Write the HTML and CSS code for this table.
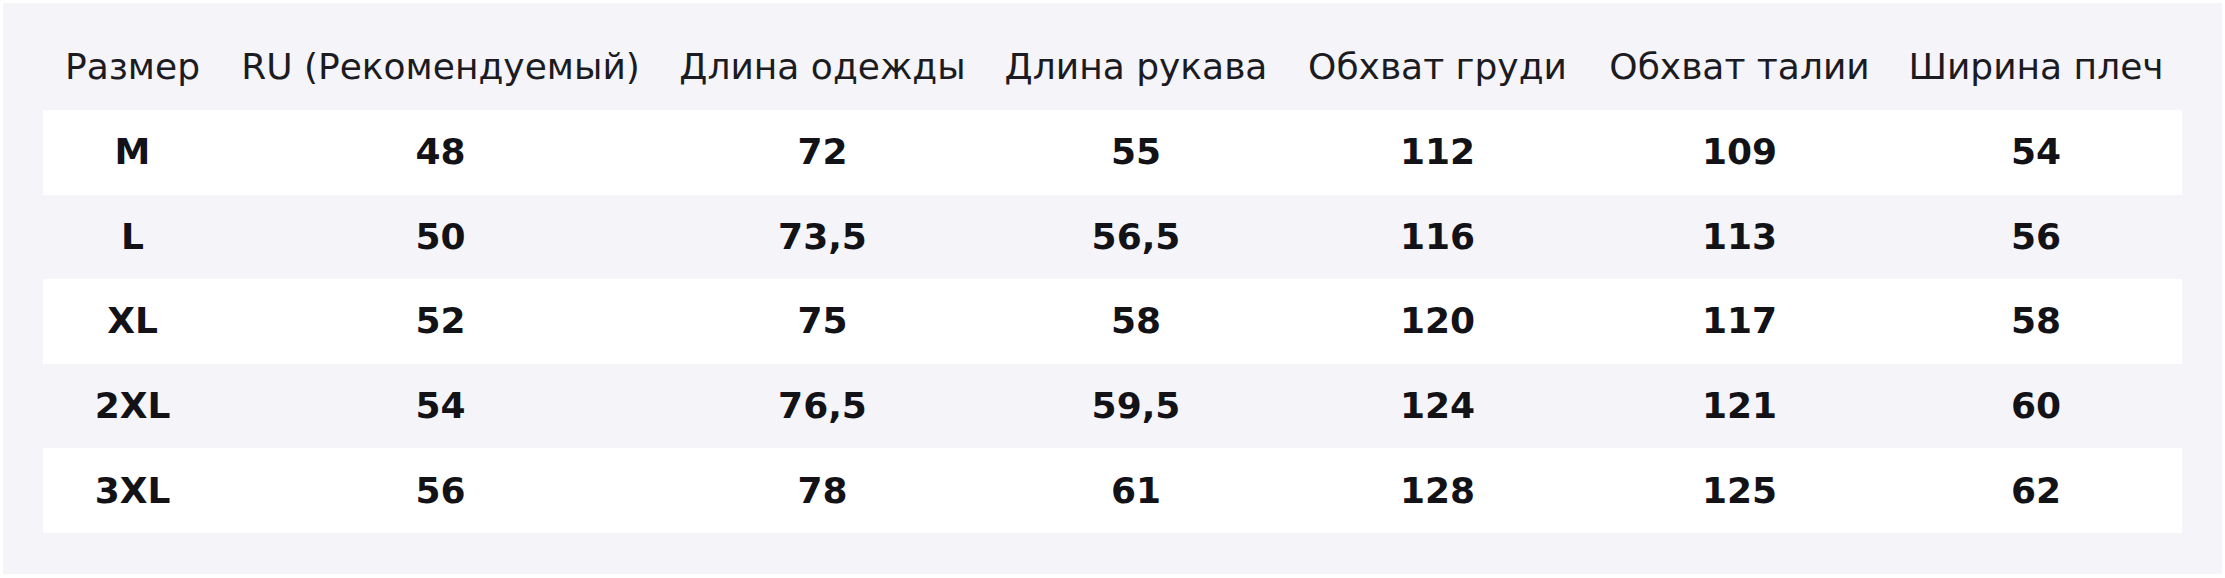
FILE: index.html
```html
<!DOCTYPE html>
<html lang="ru">
<head>
<meta charset="utf-8">
<title>Таблица размеров</title>
<link rel="stylesheet" href="styles.css">
</head>
<body>
<div class="panel">
  <table class="sizes">
    <colgroup>
      <col class="c-size">
      <col class="c-ru">
      <col class="c-len">
      <col class="c-sleeve">
      <col class="c-chest">
      <col class="c-waist">
      <col class="c-shoulder">
    </colgroup>
    <thead>
      <tr>
        <th>Размер</th>
        <th>RU (Рекомендуемый)</th>
        <th>Длина одежды</th>
        <th>Длина рукава</th>
        <th>Обхват груди</th>
        <th>Обхват талии</th>
        <th>Ширина плеч</th>
      </tr>
    </thead>
    <tbody>
      <tr><td>M</td><td>48</td><td>72</td><td>55</td><td>112</td><td>109</td><td>54</td></tr>
      <tr><td>L</td><td>50</td><td>73,5</td><td>56,5</td><td>116</td><td>113</td><td>56</td></tr>
      <tr><td>XL</td><td>52</td><td>75</td><td>58</td><td>120</td><td>117</td><td>58</td></tr>
      <tr><td>2XL</td><td>54</td><td>76,5</td><td>59,5</td><td>124</td><td>121</td><td>60</td></tr>
      <tr><td>3XL</td><td>56</td><td>78</td><td>61</td><td>128</td><td>125</td><td>62</td></tr>
    </tbody>
  </table>
</div>
</body>
</html>
```
FILE: styles.css
```css
html, body {
  margin: 0;
  padding: 0;
  background: #ffffff;
}
body {
  padding: 3px 0 0 3px;
  font-family: "DejaVu Sans", sans-serif;
}
.panel {
  width: 2219px;
  height: 571px;
  box-sizing: border-box;
  background: #f4f4f9;
  padding: 43px 40px 41px 40px;
}
.sizes {
  width: 100%;
  table-layout: fixed;
  border-collapse: collapse;
  border-spacing: 0;
}
.c-size { width: 179px; }
.c-ru { width: 437px; }
.c-len { width: 327px; }
.c-sleeve { width: 300px; }
.c-chest { width: 303px; }
.c-waist { width: 301px; }
.c-shoulder { width: 292px; }
.sizes th {
  font-weight: normal;
  font-size: 36px;
  line-height: 42px;
  color: #1b1b21;
  padding: 0 0 22px 0;
  text-align: center;
  white-space: nowrap;
}
.sizes td {
  font-weight: bold;
  font-size: 36px;
  line-height: 42px;
  color: #121217;
  height: 84.6px;
  box-sizing: border-box;
  padding: 0;
  text-align: center;
  vertical-align: middle;
}
.sizes tbody tr:nth-child(odd) {
  background: #ffffff;
}
```
